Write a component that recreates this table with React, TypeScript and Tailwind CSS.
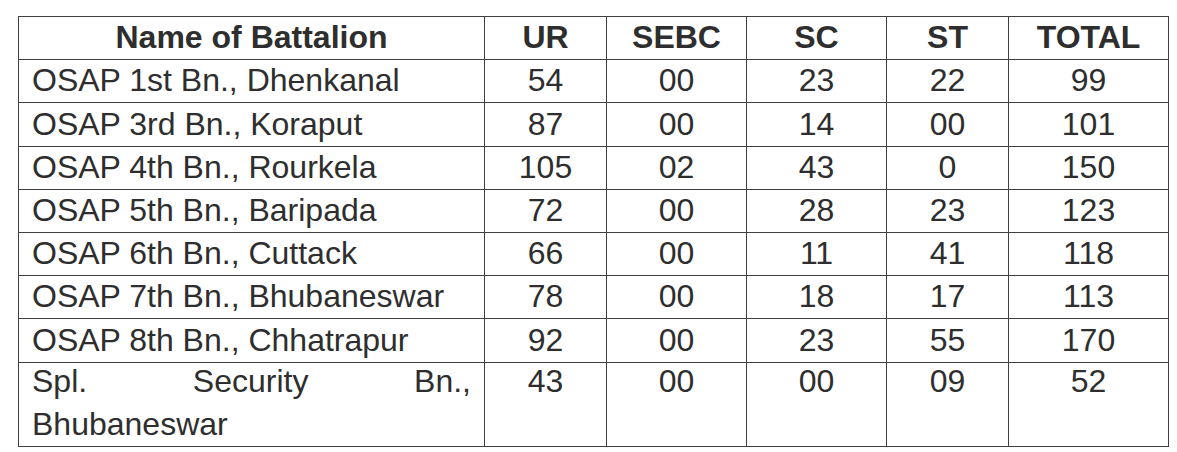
const rows: [string, string, string, string, string, string][] = [
  ['OSAP 1st Bn., Dhenkanal', '54', '00', '23', '22', '99'],
  ['OSAP 3rd Bn., Koraput', '87', '00', '14', '00', '101'],
  ['OSAP 4th Bn., Rourkela', '105', '02', '43', '0', '150'],
  ['OSAP 5th Bn., Baripada', '72', '00', '28', '23', '123'],
  ['OSAP 6th Bn., Cuttack', '66', '00', '11', '41', '118'],
  ['OSAP 7th Bn., Bhubaneswar', '78', '00', '18', '17', '113'],
  ['OSAP 8th Bn., Chhatrapur', '92', '00', '23', '55', '170'],
]

export default function App() {
  return (
    <div className="w-[1177px] h-[452px] bg-white pt-[16px] pl-[18px] font-['Liberation_Sans',Arial,sans-serif] text-[#2e2e2e]">
      <table className="table-fixed border-collapse w-[1150px] text-[32px] leading-[36px]">
        <colgroup>
          <col className="w-[466px]" />
          <col className="w-[122px]" />
          <col className="w-[140px]" />
          <col className="w-[140px]" />
          <col className="w-[122px]" />
          <col className="w-[160px]" />
        </colgroup>
        <thead>
          <tr className="h-[43px]">
            {['Name of Battalion', 'UR', 'SEBC', 'SC', 'ST', 'TOTAL'].map((h) => (
              <th key={h} className="border border-[#404040] font-bold text-center p-0 pb-[2px]">
                {h}
              </th>
            ))}
          </tr>
        </thead>
        <tbody>
          {rows.map((r, i) => (
            <tr key={r[0]} className={i === 1 || i === 6 ? 'h-[44px]' : 'h-[43px]'}>
              <td className="border border-[#404040] px-[13px] pb-[2px]">{r[0]}</td>
              {r.slice(1).map((v, j) => (
                <td key={j} className="border border-[#404040] text-center p-0 pb-[2px]">
                  {v}
                </td>
              ))}
            </tr>
          ))}
          <tr className="h-[84px] align-top">
            <td className="border border-[#404040] px-[13px] p-0 text-justify leading-[43px]">
              <div className="-mt-[3px]">Spl. Security Bn., Bhubaneswar</div>
            </td>
            {['43', '00', '00', '09', '52'].map((v, j) => (
              <td key={j} className="border border-[#404040] text-center p-0 leading-[43px]">
                <div className="-mt-[3px]">{v}</div>
              </td>
            ))}
          </tr>
        </tbody>
      </table>
    </div>
  )
}
